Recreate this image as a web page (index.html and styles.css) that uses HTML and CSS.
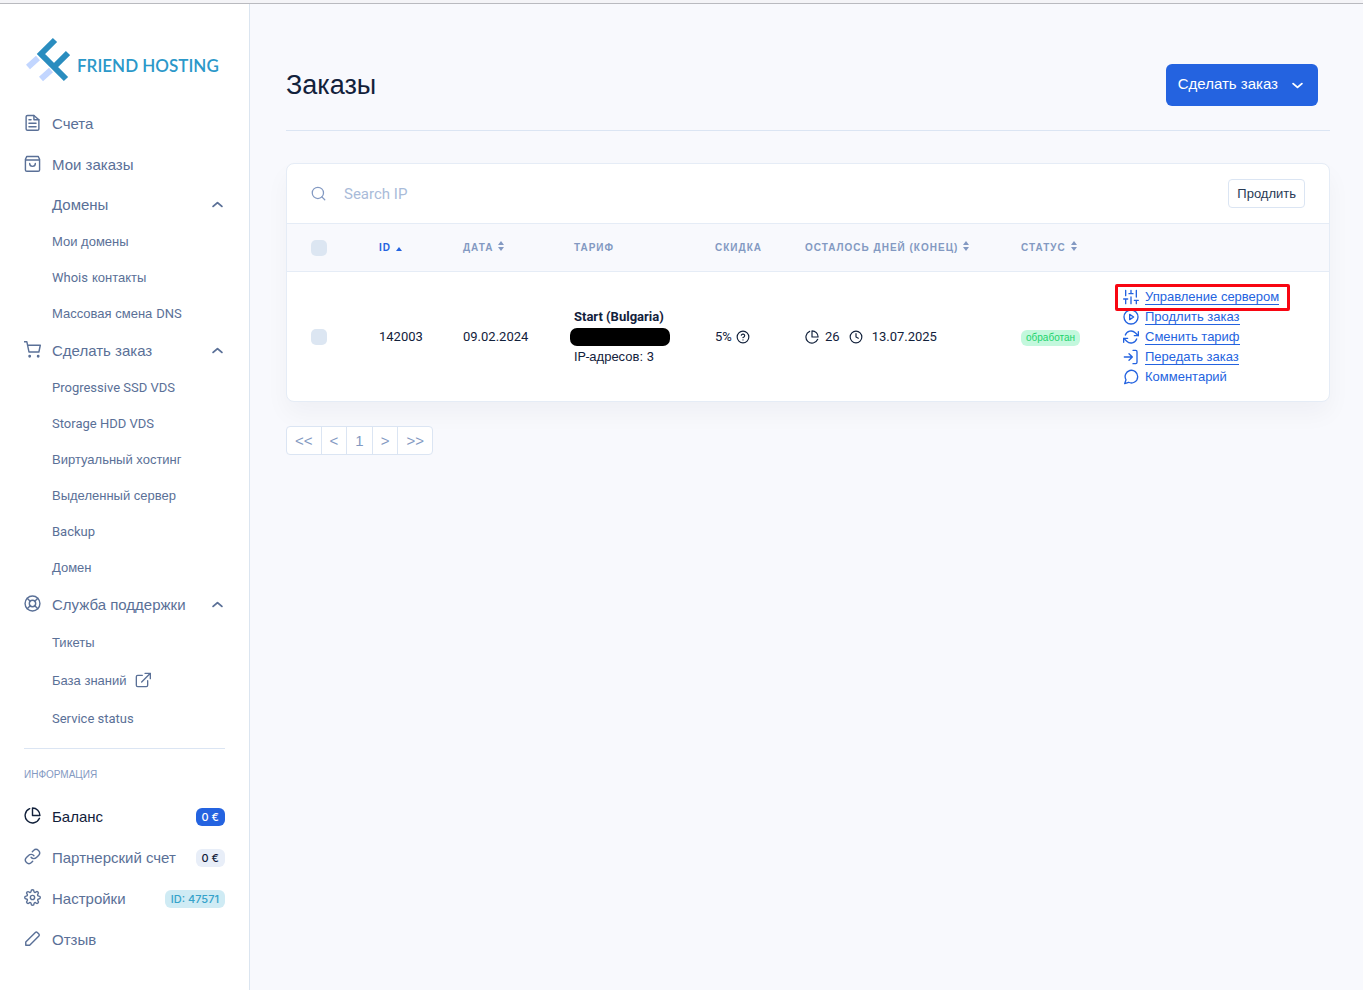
FILE: index.html
```html
<!DOCTYPE html>
<html lang="ru">
<head>
  <meta charset="UTF-8">
  <meta name="viewport" content="width=device-width, initial-scale=1.0">
  <title>Заказы</title>
  <link rel="stylesheet" href="styles.css">
</head>
<body>

  <!-- Icons -->
  <svg class="sprite" aria-hidden="true">
    <symbol id="file" viewBox="0 0 24 24"><path d="M14 2H5a2 2 0 0 0-2 2v17a2 2 0 0 0 2 2h14a2 2 0 0 0 2-2V8z"/><path d="M14 2v6h7M17 13H7M17 18H7M10 8H7"/></symbol>
    <symbol id="bag" viewBox="0 0 24 24"><path d="M4 2h16l2 4v15a2 2 0 0 1-2 2H4a2 2 0 0 1-2-2V6zM2 7h20M16 12a4 4 0 0 1-8 0"/></symbol>
    <symbol id="cart" viewBox="0 0 24 24"><circle cx="8" cy="21.500" r="1"/><circle cx="20" cy="21.500" r="1"/><path d="M0 1h4l3 14.500h14L23 6H5"/></symbol>
    <symbol id="buoy" viewBox="0 0 24 24"><circle cx="12" cy="12" r="10.500"/><circle cx="12" cy="12" r="4.500"/><path d="M4.500 4.500l4.300 4.300M15.200 15.200l4.300 4.300M15.200 8.800l4.300-4.300M4.500 19.500l4.300-4.300"/></symbol>
    <symbol id="external" viewBox="0 0 24 24"><path d="M19 13v7a2 2 0 0 1-2 2H4a2 2 0 0 1-2-2V7a2 2 0 0 1 2-2h7M15 2h8v8M10 15L23 2"/></symbol>
    <symbol id="pie" viewBox="0 0 24 24"><path d="M21.800 16A10.500 10.500 0 1 1 8 2.300"/><path d="M22.500 12A10.500 10.500 0 0 0 12 1.500V12z"/></symbol>
    <symbol id="link" viewBox="0 0 24 24"><path d="M10 13a5 5 0 0 0 7.540.54l3-3a5 5 0 0 0-7.070-7.070l-1.720 1.710"/><path d="M14 11a5 5 0 0 0-7.540-.54l-3 3a5 5 0 0 0 7.070 7.070l1.710-1.710"/></symbol>
    <symbol id="gear" viewBox="0 0 24 24"><circle cx="12" cy="12" r="3"/><path d="M19.400 15a1.650 1.650 0 0 0 .33 1.820l.06.06a2 2 0 0 1-2.830 2.830l-.06-.06a1.650 1.650 0 0 0-2.800 1.170V21a2 2 0 0 1-4 0v-.09a1.650 1.650 0 0 0-2.900-1.260l-.06.06a2 2 0 0 1-2.830-2.830l.06-.06A1.650 1.650 0 0 0 3.090 14H3a2 2 0 0 1 0-4h.09A1.650 1.650 0 0 0 4.350 7.180l-.06-.06a2 2 0 0 1 2.830-2.830l.06.06A1.650 1.650 0 0 0 10 3.090V3a2 2 0 0 1 4 0v.09a1.650 1.650 0 0 0 2.820 1.260l.06-.06a2 2 0 0 1 2.830 2.830l-.06.06A1.650 1.650 0 0 0 20.910 10H21a2 2 0 0 1 0 4h-.09a1.650 1.650 0 0 0-1.510 1z"/></symbol>
    <symbol id="pen" viewBox="0 0 24 24"><path d="M16 3.500a2 2 0 0 1 2.800 0l2.200 2.200a2 2 0 0 1 0 2.800L8 21.500H2.500V17z"/></symbol>
    <symbol id="up" viewBox="0 0 24 24"><path d="M19 15l-7-6-7 6"/></symbol>
    <symbol id="down" viewBox="0 0 24 24"><path d="M5 9l7 6 7-6"/></symbol>
    <symbol id="search" viewBox="0 0 24 24"><circle cx="11" cy="11" r="9"/><path d="M22 22l-4.600-4.600"/></symbol>
    <symbol id="help" viewBox="0 0 24 24"><circle cx="12" cy="12" r="10"/><path d="M9.090 9a3 3 0 0 1 5.830 1c0 2-3 3-3 3M12 17v.1"/></symbol>
    <symbol id="clock" viewBox="0 0 24 24"><circle cx="12" cy="12" r="10"/><path d="M12 6v6l4 2"/></symbol>
    <symbol id="sliders" viewBox="0 0 24 24"><path d="M4 22v-7M4 10V2M12 22V12M12 7V2M20 22v-5M20 12V2M1 15h6M9 7h6M17 17h6"/></symbol>
    <symbol id="play" viewBox="0 0 24 24"><circle cx="12" cy="12" r="10.500"/><path d="M10 8l6 4-6 4z"/></symbol>
    <symbol id="refresh" viewBox="0 0 24 24"><path d="M23 4v6h-6M1 20v-6h6"/><path d="M3.510 9a9 9 0 0 1 14.850-3.360L23 10M1 14l4.640 4.360A9 9 0 0 0 20.490 15"/></symbol>
    <symbol id="enter" viewBox="0 0 24 24"><path d="M15 2h4a2 2 0 0 1 2 2v16a2 2 0 0 1-2 2h-4M9 17l5-5-5-5M14 12H2"/></symbol>
    <symbol id="comment" viewBox="0 0 24 24"><path d="M22 11.500a9.400 9.400 0 0 1-13.600 8.400L2.500 22l2-5.900A9.400 9.400 0 1 1 22 11.500z"/></symbol>
    <symbol id="sort" viewBox="0 0 8 12"><path d="M4 0l3 4H1zM4 10l3-4H1z"/></symbol>
    <symbol id="sort-up" viewBox="0 0 8 12"><path d="M4 6l3 4H1z"/></symbol>
  </svg>

  <div class="page">
    <aside class="sidebar">
      <a class="logo" href="#">
        <svg class="logo-mark" viewBox="0 0 44 44" aria-hidden="true">
          <path class="logo-light" d="M2 29L12 20M15 41L25 32"/>
          <path class="logo-dark" d="M29 2L15 16L40 41M28 29L42 15"/>
        </svg>
        <span>FRIEND HOSTING</span>
      </a>

      <nav>
        <ul class="menu">
          <li><a class="menu-link" href="#"><svg class="icon"><use href="#file"/></svg>Счета</a></li>
          <li><a class="menu-link" href="#"><svg class="icon"><use href="#bag"/></svg>Мои заказы</a></li>
          <li>
            <a class="menu-link no-icon" href="#">Домены<svg class="icon chevron"><use href="#up"/></svg></a>
            <ul class="submenu">
              <li><a href="#">Мои домены</a></li>
              <li><a href="#"><span class="latin">Whois</span> контакты</a></li>
              <li><a href="#">Массовая смена <span class="latin">DNS</span></a></li>
            </ul>
          </li>
          <li>
            <a class="menu-link" href="#"><svg class="icon"><use href="#cart"/></svg>Сделать заказ<svg class="icon chevron"><use href="#up"/></svg></a>
            <ul class="submenu">
              <li><a class="latin" href="#">Progressive SSD VDS</a></li>
              <li><a class="latin" href="#">Storage HDD VDS</a></li>
              <li><a href="#">Виртуальный хостинг</a></li>
              <li><a href="#">Выделенный сервер</a></li>
              <li><a class="latin" href="#">Backup</a></li>
              <li><a href="#">Домен</a></li>
            </ul>
          </li>
          <li>
            <a class="menu-link" href="#"><svg class="icon"><use href="#buoy"/></svg>Служба поддержки<svg class="icon chevron"><use href="#up"/></svg></a>
            <ul class="submenu support">
              <li><a href="#">Тикеты</a></li>
              <li><a href="#">База знаний <svg class="icon external"><use href="#external"/></svg></a></li>
              <li><a class="latin" href="#">Service status</a></li>
            </ul>
          </li>
        </ul>

        <hr class="divider">
        <h6 class="menu-title">Информация</h6>

        <ul class="menu">
          <li><a class="menu-link active" href="#"><svg class="icon"><use href="#pie"/></svg>Баланс<span class="badge badge-primary">0 €</span></a></li>
          <li><a class="menu-link" href="#"><svg class="icon"><use href="#link"/></svg>Партнерский счет<span class="badge badge-light">0 €</span></a></li>
          <li><a class="menu-link" href="#"><svg class="icon"><use href="#gear"/></svg>Настройки<span class="badge badge-info">ID: 47571</span></a></li>
          <li><a class="menu-link" href="#"><svg class="icon"><use href="#pen"/></svg>Отзыв</a></li>
        </ul>
      </nav>
    </aside>

    <main class="content">
      <header class="header">
        <h1>Заказы</h1>
        <button class="btn-primary" type="button">Сделать заказ<svg class="icon"><use href="#down"/></svg></button>
      </header>

      <section class="card">
        <form class="search">
          <label for="search-ip" aria-label="Search IP"><svg class="icon"><use href="#search"/></svg></label>
          <input class="latin" id="search-ip" type="text" placeholder="Search IP">
          <button class="btn-white" type="button">Продлить</button>
        </form>

        <table class="orders">
          <colgroup>
            <col class="col-check">
            <col class="col-id">
            <col class="col-date">
            <col class="col-plan">
            <col class="col-discount">
            <col class="col-days">
            <col class="col-status">
            <col>
          </colgroup>
          <thead>
            <tr>
              <th><input type="checkbox" aria-label="Выбрать все"></th>
              <th class="sorted">ID <svg class="sort"><use href="#sort-up"/></svg></th>
              <th>Дата <svg class="sort"><use href="#sort"/></svg></th>
              <th>Тариф</th>
              <th>Скидка</th>
              <th>Осталось дней (конец) <svg class="sort"><use href="#sort"/></svg></th>
              <th>Статус <svg class="sort"><use href="#sort"/></svg></th>
              <th></th>
            </tr>
          </thead>
          <tbody>
            <tr>
              <td><input type="checkbox" aria-label="Выбрать заказ 142003"></td>
              <td class="latin">142003</td>
              <td class="latin">09.02.2024</td>
              <td>
                <strong class="latin">Start (Bulgaria)</strong>
                <span class="redacted"></span>
                <span class="latin">IP-</span>адресов: <span class="latin">3</span>
              </td>
              <td class="latin"><span class="with-icon">5% <svg class="icon"><use href="#help"/></svg></span></td>
              <td class="latin">
                <span class="term">
                  <svg class="icon"><use href="#pie"/></svg><span>26</span>
                  <svg class="icon clock"><use href="#clock"/></svg><span>13.07.2025</span>
                </span>
              </td>
              <td><span class="status">обработан</span></td>
              <td>
                <ul class="actions">
                  <li class="highlight"><a href="#"><svg class="icon"><use href="#sliders"/></svg><span>Управление сервером</span></a></li>
                  <li><a href="#"><svg class="icon"><use href="#play"/></svg><span>Продлить заказ</span></a></li>
                  <li><a href="#"><svg class="icon"><use href="#refresh"/></svg><span>Сменить тариф</span></a></li>
                  <li><a href="#"><svg class="icon"><use href="#enter"/></svg><span>Передать заказ</span></a></li>
                  <li><a class="plain" href="#"><svg class="icon"><use href="#comment"/></svg><span>Комментарий</span></a></li>
                </ul>
              </td>
            </tr>
          </tbody>
        </table>
      </section>

      <nav class="pagination">
        <a href="#">&lt;&lt;</a>
        <a href="#">&lt;</a>
        <a href="#">1</a>
        <a href="#">&gt;</a>
        <a href="#">&gt;&gt;</a>
      </nav>
    </main>
  </div>

</body>
</html>
```
FILE: styles.css
```css
* {
  box-sizing: border-box;
}

body {
  margin: 0;
  font-family: "Liberation Sans", Arial, sans-serif;
  font-size: 13px;
  line-height: 20px;
  color: #12213b;
  background-color: #f8f9fd;
  border-top: 3px solid #f4f4f7;
}

a {
  color: inherit;
  text-decoration: none;
}

ul {
  list-style: none;
  margin: 0;
  padding: 0;
}

button,
input {
  font-family: inherit;
  margin: 0;
}

.latin {
  font-family: Roboto, "Liberation Sans", sans-serif;
}

.sprite {
  display: none;
}

.icon {
  width: 17px;
  height: 17px;
  flex: none;
  fill: none;
  stroke: currentColor;
  stroke-width: 2;
  stroke-linecap: round;
  stroke-linejoin: round;
}

.page {
  display: flex;
  min-height: calc(100vh - 3px);
  border-top: 1px solid #b9babf;
}

/* Sidebar */
.sidebar {
  width: 250px;
  flex: none;
  padding: 32px 24px 24px;
  background-color: #fff;
  border-right: 1px solid #dbe5f0;
}

.logo {
  display: flex;
  align-items: center;
  gap: 7px;
  margin-bottom: 19px;
  padding-left: 2px;
  color: #2b98c9;
  font-family: Lato, sans-serif;
  font-size: 17px;
  font-weight: 600;
  white-space: nowrap;
}

.logo span {
  padding-top: 12px;
}

.logo-mark {
  width: 44px;
  height: 48px;
  flex: none;
  fill: none;
  stroke-width: 6;
}

.logo-dark {
  stroke: #2a8dbf;
}

.logo-light {
  stroke: #c2d6ff;
}

.menu-link {
  display: flex;
  align-items: center;
  height: 41px;
  gap: 11px;
  color: #5a7097;
  font-size: 15px;
  white-space: nowrap;
}

.menu-link > .icon:first-child {
  margin-bottom: 2px;
}

.menu-link.no-icon {
  height: 40px;
  padding-left: 28px;
}

.menu-link.active {
  color: #12213b;
}

.menu-link .chevron {
  width: 15px;
  height: 15px;
  margin-left: auto;
  stroke-width: 3;
}

.submenu {
  margin-top: -1px;
  margin-bottom: -2px;
  padding-left: 28px;
  color: #5a7097;
}

.submenu a {
  display: flex;
  align-items: center;
  height: 36px;
  gap: 4px;
  white-space: nowrap;
}

.submenu.support a {
  height: 38px;
}

.external {
  width: 16px;
  height: 16px;
  margin-left: 4px;
  margin-bottom: 2px;
}

.divider {
  margin: 12px 0 16px;
  border: 0;
  border-top: 1px solid #dbe5f3;
}

.menu-title {
  margin: 0 0 11px;
  color: #8399c2;
  font-size: 10px;
  font-weight: 400;
  text-transform: uppercase;
}

.badge {
  margin-left: auto;
  padding: 0 6px;
  border-radius: 6px;
  font-family: Inter, sans-serif;
  font-size: 11px;
  font-weight: 500;
  line-height: 18px;
}

.badge-primary {
  color: #fff;
  background-color: #2463e0;
}

.badge-light {
  color: #12213b;
  background-color: #e8eef8;
}

.badge-info {
  color: #35a2ca;
  background-color: #cfebf4;
}

/* Content */
.content {
  flex: 1;
  min-width: 0;
  padding: 36px 33px 36px 36px;
}

.header {
  display: flex;
  align-items: center;
  justify-content: space-between;
  padding: 24px 12px 24px 0;
  border-bottom: 1px solid #dbe5f3;
}

.header h1 {
  margin: 0;
  font-size: 27px;
  font-weight: 400;
  line-height: 32px;
}

.btn-primary {
  display: flex;
  align-items: center;
  gap: 12px;
  height: 42px;
  padding: 0 13px 3px 12px;
  border: 0;
  border-radius: 6px;
  color: #fff;
  background-color: #2463e0;
  font-size: 15px;
}

.btn-primary .icon {
  stroke-width: 3;
  width: 15px;
  height: 15px;
  margin-top: 4px;
}

.card {
  margin-top: 32px;
  border: 1px solid #e5ecf6;
  border-radius: 8px;
  background-color: #fff;
  box-shadow: 0 12px 24px rgba(18, 38, 63, 0.04);
}

.search {
  display: flex;
  align-items: center;
  height: 59px;
  padding: 0 24px;
}

.search label {
  display: flex;
  color: #8399c2;
}

.search .icon {
  width: 15px;
  height: 15px;
}

.search input {
  flex: 1;
  padding: 0 18px;
  border: 0;
  outline: 0;
  background: none;
  color: #12213b;
  font-size: 15px;
}

.search input::placeholder {
  color: #a9bbd9;
}

.btn-white {
  height: 29px;
  padding: 0 8px;
  border: 1px solid #dbe5f3;
  border-radius: 4px;
  color: #283a55;
  background-color: #fff;
  font-size: 13px;
}

/* Orders table */
.orders {
  width: 100%;
  table-layout: fixed;
  border-collapse: collapse;
}

.col-check { width: 68px; }
.col-id { width: 84px; }
.col-date { width: 111px; }
.col-plan { width: 141px; }
.col-discount { width: 90px; }
.col-days { width: 216px; }
.col-status { width: 102px; }

.orders th,
.orders td {
  padding: 0 0 0 24px;
  text-align: left;
  vertical-align: middle;
  white-space: nowrap;
}

.orders th {
  height: 48px;
  border-top: 1px solid #e5ecf6;
  border-bottom: 1px solid #e5ecf6;
  background-color: #f8f9fd;
  color: #8399c2;
  font-size: 10px;
  font-weight: 700;
  letter-spacing: 1px;
  text-transform: uppercase;
}

.orders th.sorted {
  color: #2463e0;
}

.orders td {
  height: 129px;
  padding-top: 2px;
}

.sort {
  width: 8px;
  height: 12px;
  fill: currentColor;
  vertical-align: -2px;
}

.orders input {
  display: block;
  width: 16px;
  height: 16px;
  appearance: none;
  border-radius: 5px;
  background-color: #dce6f2;
}

.orders strong {
  display: block;
  font-weight: 700;
}

.redacted {
  display: block;
  width: 100px;
  height: 18px;
  margin: 1px 0 1px -4px;
  border-radius: 7px;
  background-color: #000;
}

.with-icon,
.term {
  display: flex;
  align-items: center;
  gap: 4px;
}

.with-icon .icon,
.term .icon {
  width: 14px;
  height: 14px;
}

.term {
  gap: 6px;
}

.term .clock {
  margin: 0 3px;
}

.status {
  display: inline-block;
  padding: 0 5px;
  border-radius: 6px;
  color: #1bd36b;
  background-color: #c3f8dd;
  font-size: 10px;
  line-height: 16px;
}

.actions {
  color: #2463e0;
}

.actions li {
  display: flex;
  height: 20px;
}

.actions a {
  display: flex;
  align-items: center;
  gap: 6px;
}

.actions .icon {
  width: 16px;
  height: 16px;
}

.actions span {
  border-bottom: 1px solid #2463e0;
  line-height: 15px;
}

.actions .plain span {
  border-color: transparent;
}

/* Frame around the server management link */
.highlight a {
  position: relative;
}

.highlight a::after {
  content: "";
  position: absolute;
  inset: -3px -11px -4px -8px;
  border: 3px solid #f80612;
  border-radius: 2px;
}

/* Pagination */
.pagination {
  display: inline-flex;
  margin-top: 24px;
  border: 1px solid #dbe5f3;
  border-radius: 4px;
  background-color: #fff;
  color: #8399c2;
  font-size: 15px;
}

.pagination a {
  padding: 0 8px;
  line-height: 27px;
}

.pagination a + a {
  border-left: 1px solid #dbe5f3;
}
```
